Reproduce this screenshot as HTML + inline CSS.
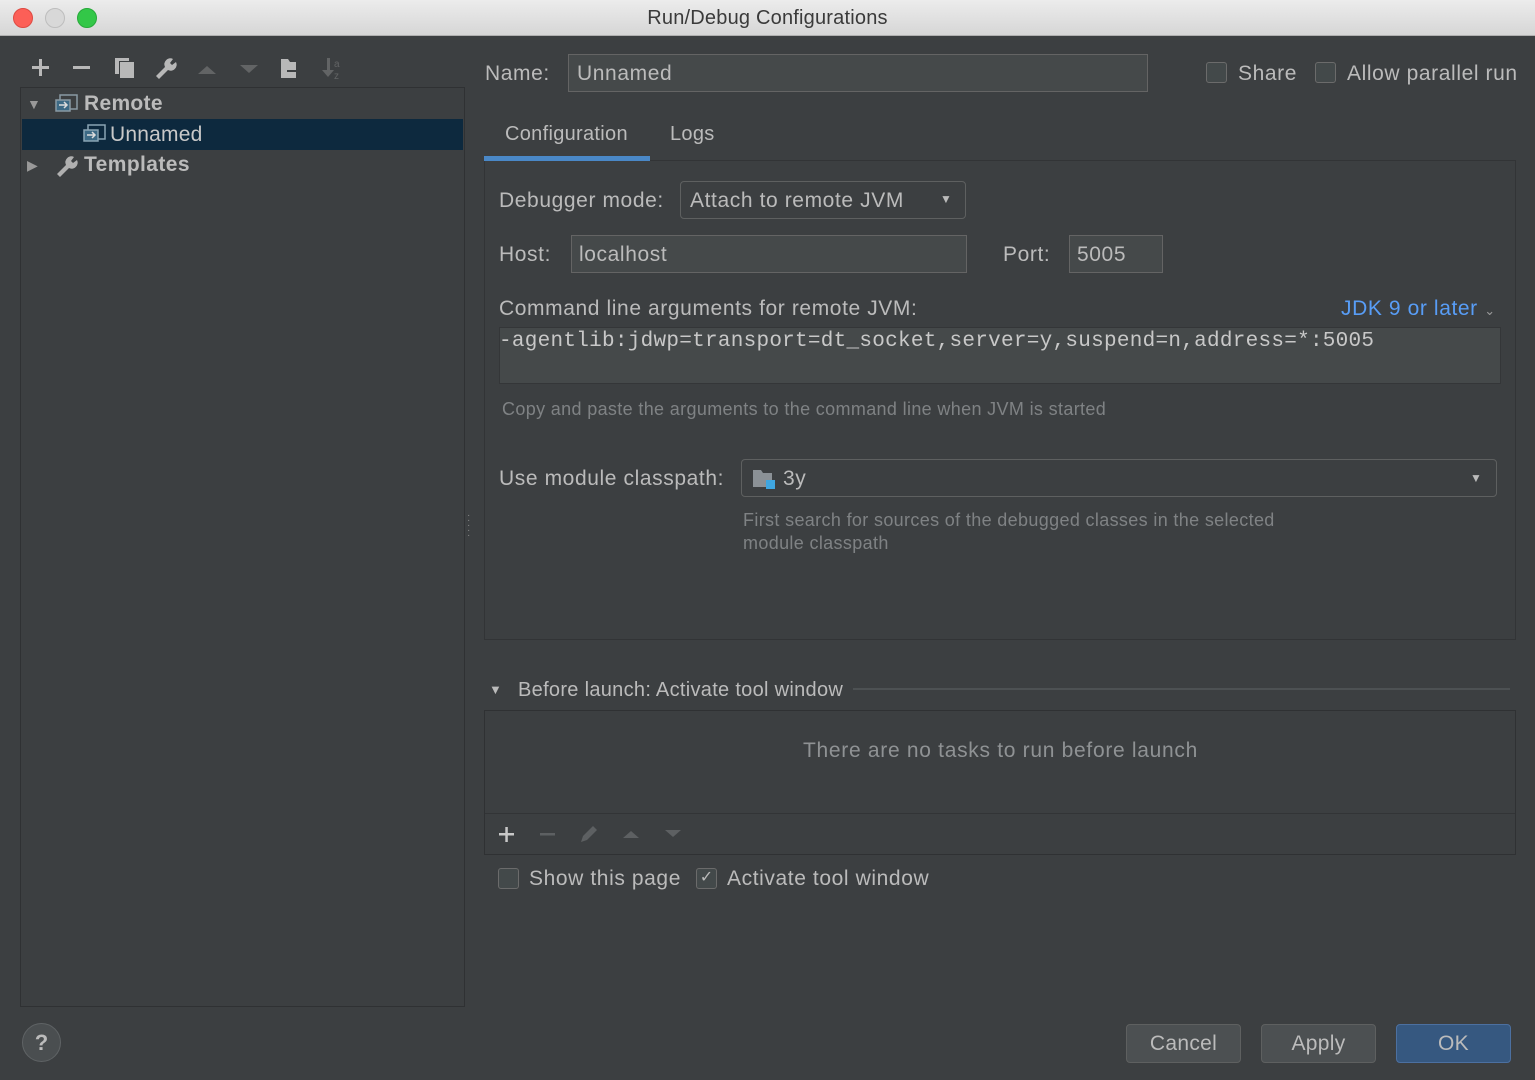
<!DOCTYPE html>
<html><head><meta charset="utf-8"><style>
*{box-sizing:border-box;margin:0;padding:0}
body{width:1535px;height:1080px;background:#3c3f41;font-family:"Liberation Sans",sans-serif;color:#bbbbbb;position:relative;overflow:hidden;font-size:21px;letter-spacing:0.6px}
.a{position:absolute;white-space:nowrap}
.title{left:0;top:0;width:1535px;height:36px;background:linear-gradient(#ececec,#d6d6d6);border-bottom:1px solid #b0b0b0;color:#3a3a3a;font-size:20px;letter-spacing:0.2px;text-align:center;line-height:37px}
.dot{position:absolute;top:8px;width:20px;height:20px;border-radius:50%}
.field{position:absolute;background:#45494a;border:1px solid #646464}
.cb{position:absolute;width:21px;height:21px;border:1px solid #6b6b6b;border-radius:3px;background:#43494a;letter-spacing:0}
.btn{position:absolute;height:39px;border:1px solid #5e6060;border-radius:4px;background:#4c5052;text-align:center;line-height:38px;font-size:21px;letter-spacing:0.3px}
.s{font-size:18px;letter-spacing:0.35px;color:#7f8284}
</style></head><body>
<div class="a title">Run/Debug Configurations
<div class="dot" style="left:13px;background:#fc5f57;border:1px solid #de4a42"></div>
<div class="dot" style="left:45px;background:#d8d8d8;border:1px solid #bdbdbd"></div>
<div class="dot" style="left:77px;background:#33c748;border:1px solid #27a93a"></div>
</div>

<svg class="a" style="left:28px;top:55px" width="330" height="28" viewBox="0 0 330 28">
<g fill="#b8b8b8">
<rect x="4" y="11" width="17" height="3"/><rect x="11" y="4" width="3" height="17"/>
<rect x="45" y="11" width="17" height="3"/>
<rect x="87" y="3" width="4" height="16"/><rect x="87" y="3" width="14" height="3"/>
<rect x="92" y="7" width="14" height="16"/>
<path d="M128 21 l9-9 a6 6 0 0 1 8-8 l-3 4 2 2 4-3 a6 6 0 0 1-8 8 l-9 9z"/>
<path d="M253 4h7l2 3h6v16h-15z"/><rect x="259" y="15" width="9" height="2" fill="#3c3f41"/>
</g>
<g fill="#626465"><path d="M170 19 l9-8 9 8z"/><path d="M212 10 l9 8 9-8z"/>
<rect x="299" y="3" width="3" height="16"/><path d="M294 15 l6 7 6-7z"/><text x="306" y="12" font-size="10" font-family="Liberation Sans">a</text><text x="306" y="24" font-size="10" font-family="Liberation Sans">z</text></g>
</svg>

<div class="a" style="left:20px;top:87px;width:445px;height:920px;border:1px solid #2f3133;background:#3c3f41"></div>
<div class="a" style="left:22px;top:119px;width:441px;height:31px;background:#0d293e"></div>
<div class="a" style="left:27px;top:96px;font-size:14px;color:#999">▼</div>
<svg class="a" style="left:55px;top:94px" width="24" height="20"><rect x="5" y="1" width="17" height="14" fill="none" stroke="#8a9aa4" stroke-width="1.5"/><rect x="1" y="6" width="14" height="11" fill="#3d6a85" stroke="#8a9aa4" stroke-width="1.5"/><path d="M4 11h8M9 8l3 3-3 3" stroke="#ddd" stroke-width="1.5" fill="none"/></svg>
<div class="a" style="left:84px;top:92px;font-weight:bold;font-size:21px;letter-spacing:0.3px">Remote</div>
<svg class="a" style="left:83px;top:124px" width="24" height="20"><rect x="5" y="1" width="17" height="14" fill="none" stroke="#8aa4b4" stroke-width="1.5"/><rect x="1" y="6" width="14" height="11" fill="#3d6a85" stroke="#8aa4b4" stroke-width="1.5"/><path d="M4 11h8M9 8l3 3-3 3" stroke="#ddd" stroke-width="1.5" fill="none"/></svg>
<div class="a" style="left:110px;top:123px;font-size:21px;letter-spacing:0.2px;color:#c8c8c8">Unnamed</div>
<div class="a" style="left:27px;top:157px;font-size:14px;color:#999">▶</div>
<svg class="a" style="left:55px;top:154px" width="24" height="24"><path d="M2 20 l9-9 a6 6 0 0 1 8-8 l-3 4 2 2 4-3 a6 6 0 0 1-8 8 l-9 9z" fill="#b0b0b0"/></svg>
<div class="a" style="left:84px;top:153px;font-weight:bold;font-size:21px;letter-spacing:0.4px">Templates</div>
<div class="a" style="left:467px;top:513px;color:#888;font-size:10px;line-height:5px">·<br>·<br>·<br>·<br>·</div>

<div class="a" style="left:22px;top:1023px;width:39px;height:39px;border-radius:50%;border:1px solid #5f6365;background:#4a4e50;text-align:center;line-height:38px;font-weight:bold;font-size:22px;letter-spacing:0">?</div>

<div class="a" style="left:485px;top:62px">Name:</div>
<div class="field" style="left:568px;top:54px;width:580px;height:38px"></div>
<div class="a" style="left:577px;top:62px">Unnamed</div>
<div class="cb" style="left:1206px;top:62px"></div>
<div class="a" style="left:1238px;top:62px">Share</div>
<div class="cb" style="left:1315px;top:62px"></div>
<div class="a" style="left:1347px;top:62px">Allow parallel run</div>

<div class="a" style="left:505px;top:123px;font-size:20px;letter-spacing:0.3px">Configuration</div>
<div class="a" style="left:670px;top:123px;font-size:20px;letter-spacing:0.3px">Logs</div>
<div class="a" style="left:484px;top:160px;width:1032px;height:480px;border:1px solid #323436;background:#3c3f41"></div>
<div class="a" style="left:484px;top:156px;width:166px;height:5px;background:#4a88c7"></div>

<div class="a" style="left:499px;top:189px">Debugger mode:</div>
<div class="a" style="left:680px;top:181px;width:286px;height:38px;border:1px solid #5e6060;border-radius:4px;background:#3c3f41"></div>
<div class="a" style="left:690px;top:189px">Attach to remote JVM</div>
<div class="a" style="left:940px;top:192px;font-size:12px">▼</div>

<div class="a" style="left:499px;top:243px">Host:</div>
<div class="field" style="left:571px;top:235px;width:396px;height:38px"></div>
<div class="a" style="left:579px;top:243px">localhost</div>
<div class="a" style="left:1003px;top:243px">Port:</div>
<div class="field" style="left:1069px;top:235px;width:94px;height:38px"></div>
<div class="a" style="left:1077px;top:243px">5005</div>

<div class="a" style="left:499px;top:297px">Command line arguments for remote JVM:</div>
<div class="a" style="left:1341px;top:297px;color:#589df6">JDK 9 or later <span style="font-size:13px;color:#999">⌄</span></div>
<div class="a" style="left:499px;top:327px;width:1002px;height:57px;background:#45494a;border:1px solid #343638"></div>
<div class="a" style="left:499px;top:330px;font-family:'Liberation Mono',monospace;font-size:21px;color:#c8c8c8;letter-spacing:0.27px">-agentlib:jdwp=transport=dt_socket,server=y,suspend=n,address=*:5005</div>
<div class="a s" style="left:502px;top:399px">Copy and paste the arguments to the command line when JVM is started</div>

<div class="a" style="left:499px;top:467px">Use module classpath:</div>
<div class="a" style="left:741px;top:459px;width:756px;height:38px;border:1px solid #5e6060;border-radius:4px;background:#3c3f41"></div>
<svg class="a" style="left:752px;top:468px" width="26" height="22"><path d="M1 2h8l2 3h9v14H1z" fill="#8b9196"/><rect x="14" y="12" width="9" height="9" fill="#3fa6e0"/></svg>
<div class="a" style="left:783px;top:467px">3y</div>
<div class="a" style="left:1470px;top:471px;font-size:12px">▼</div>
<div class="a s" style="left:743px;top:509px;line-height:23px">First search for sources of the debugged classes in the selected<br>module classpath</div>

<div class="a" style="left:489px;top:682px;font-size:13px">▼</div>
<div class="a" style="left:518px;top:679px;font-size:20px;letter-spacing:0.3px">Before launch: Activate tool window</div>
<div class="a" style="left:853px;top:688px;width:657px;height:2px;background:#4d5153"></div>
<div class="a" style="left:484px;top:710px;width:1032px;height:145px;border:1px solid #2f3133;background:#3c3f41"></div>
<div class="a" style="left:485px;top:813px;width:1030px;height:1px;background:#323436"></div>
<div class="a" style="left:803px;top:739px;color:#8f9294;letter-spacing:0.7px">There are no tasks to run before launch</div>
<svg class="a" style="left:495px;top:822px" width="200" height="24"><g fill="#c8c8c8"><rect x="4" y="11" width="15" height="2.5"/><rect x="10.3" y="5" width="2.5" height="15"/></g><g fill="#5d6062"><rect x="45" y="11" width="15" height="2.5"/><path d="M86 20l2-6 10-10 4 4-10 10z"/><path d="M128 16l8-7 8 7z"/><path d="M170 8l8 7 8-7z"/></g></svg>
<div class="cb" style="left:498px;top:868px"></div>
<div class="a" style="left:529px;top:867px">Show this page</div>
<div class="cb" style="left:696px;top:868px;text-align:center;line-height:18px;font-size:16px">✓</div>
<div class="a" style="left:727px;top:867px">Activate tool window</div>

<div class="btn" style="left:1126px;top:1024px;width:115px">Cancel</div>
<div class="btn" style="left:1261px;top:1024px;width:115px">Apply</div>
<div class="btn" style="left:1396px;top:1024px;width:115px;background:#365880;border-color:#4c70a0">OK</div>
</body></html>
